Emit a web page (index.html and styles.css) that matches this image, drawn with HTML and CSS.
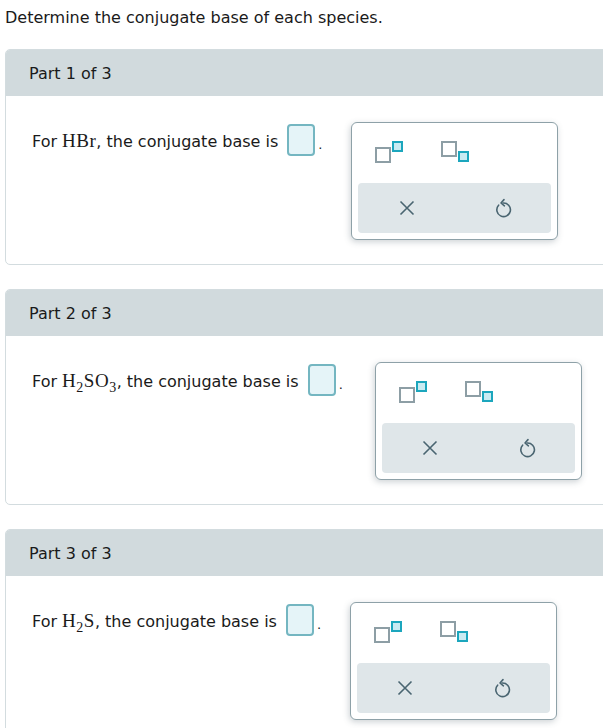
FILE: index.html
```html
<!DOCTYPE html>
<html>
<head>
<meta charset="utf-8">
<link rel="stylesheet" href="styles.css">
</head>
<body>
<div class="page">
  <p class="title">Determine the conjugate base of each species.</p>

  <section class="card">
    <div class="card-head">Part 1 of 3</div>
    <div class="card-body">
      <div class="question">
        <span>For <span class="math">HBr</span>, the conjugate base is</span>
        <span class="answer"></span>
        <span class="dot">.</span>
      </div>
      <div class="palette">
        <div class="tools">
          <span class="tool sup"><i class="big"></i><i class="small"></i></span>
          <span class="tool sub"><i class="big"></i><i class="small"></i></span>
        </div>
        <div class="actions">
          <span class="act"><svg width="16" height="16" viewBox="0 0 16 16"><path d="M1.5 1.5 L14.5 14.5 M14.5 1.5 L1.5 14.5" stroke="#4a6571" stroke-width="1.6" fill="none"/></svg></span>
          <span class="act"><svg width="18" height="20" viewBox="0 0 18 20"><path d="M4.6 7.2 A6.8 6.8 0 1 0 9 5" stroke="#4a6571" stroke-width="1.6" fill="none" stroke-linecap="round"/><path d="M10 1.6 L7 5 L10.4 7.8" stroke="#4a6571" stroke-width="1.6" fill="none" stroke-linecap="round" stroke-linejoin="round"/></svg></span>
        </div>
      </div>
    </div>
  </section>

  <section class="card">
    <div class="card-head">Part 2 of 3</div>
    <div class="card-body">
      <div class="question">
        <span>For <span class="math">H<sub>2</sub>SO<sub>3</sub></span>, the conjugate base is</span>
        <span class="answer"></span>
        <span class="dot">.</span>
      </div>
      <div class="palette wide-gap">
        <div class="tools">
          <span class="tool sup"><i class="big"></i><i class="small"></i></span>
          <span class="tool sub"><i class="big"></i><i class="small"></i></span>
        </div>
        <div class="actions">
          <span class="act"><svg width="16" height="16" viewBox="0 0 16 16"><path d="M1.5 1.5 L14.5 14.5 M14.5 1.5 L1.5 14.5" stroke="#4a6571" stroke-width="1.6" fill="none"/></svg></span>
          <span class="act"><svg width="18" height="20" viewBox="0 0 18 20"><path d="M4.6 7.2 A6.8 6.8 0 1 0 9 5" stroke="#4a6571" stroke-width="1.6" fill="none" stroke-linecap="round"/><path d="M10 1.6 L7 5 L10.4 7.8" stroke="#4a6571" stroke-width="1.6" fill="none" stroke-linecap="round" stroke-linejoin="round"/></svg></span>
        </div>
      </div>
    </div>
  </section>

  <section class="card">
    <div class="card-head">Part 3 of 3</div>
    <div class="card-body">
      <div class="question">
        <span>For <span class="math">H<sub>2</sub>S</span>, the conjugate base is</span>
        <span class="answer"></span>
        <span class="dot">.</span>
      </div>
      <div class="palette">
        <div class="tools">
          <span class="tool sup"><i class="big"></i><i class="small"></i></span>
          <span class="tool sub"><i class="big"></i><i class="small"></i></span>
        </div>
        <div class="actions">
          <span class="act"><svg width="16" height="16" viewBox="0 0 16 16"><path d="M1.5 1.5 L14.5 14.5 M14.5 1.5 L1.5 14.5" stroke="#4a6571" stroke-width="1.6" fill="none"/></svg></span>
          <span class="act"><svg width="18" height="20" viewBox="0 0 18 20"><path d="M4.6 7.2 A6.8 6.8 0 1 0 9 5" stroke="#4a6571" stroke-width="1.6" fill="none" stroke-linecap="round"/><path d="M10 1.6 L7 5 L10.4 7.8" stroke="#4a6571" stroke-width="1.6" fill="none" stroke-linecap="round" stroke-linejoin="round"/></svg></span>
        </div>
      </div>
    </div>
  </section>
</div>
</body>
</html>
```

FILE: styles.css
```css
html, body {
  margin: 0;
  padding: 0;
  background: #ffffff;
  overflow: hidden;
}

.page {
  font-family: "DejaVu Sans", Verdana, sans-serif;
  font-size: 16px;
  color: #1a1a1a;
  padding: 0 0 0 5px;
  width: 620px;
}

.title {
  margin: 0;
  padding-top: 8px;
  height: 49px;
  box-sizing: border-box;
  line-height: 20px;
}

.card {
  border: 1px solid #d3dcdf;
  border-radius: 5px;
  margin-bottom: 24px;
  overflow: hidden;
}

.card:last-child {
  margin-bottom: 0;
}

.card-head {
  background: #d1dadd;
  height: 46px;
  box-sizing: border-box;
  padding-top: 2px;
  line-height: 44px;
  padding-left: 23px;
}

.card-body {
  height: 168px;
  display: flex;
  align-items: flex-start;
  padding: 26px 0 0 26px;
  box-sizing: border-box;
}

.question {
  display: flex;
  align-items: center;
  margin-top: 3px;
  height: 32px;
  white-space: nowrap;
}

.math {
  font-family: "Liberation Serif", "Times New Roman", serif;
  font-size: 19px;
  letter-spacing: 0.5px;
}

.math sub {
  font-size: 14px;
  vertical-align: -5px;
  line-height: 0;
}

.answer {
  display: inline-block;
  width: 28px;
  height: 32px;
  box-sizing: border-box;
  border: 2px solid #74b6c1;
  background: #e5f4f8;
  border-radius: 4px;
  margin-left: 9px;
  margin-top: -2px;
}

.dot {
  margin-left: 3px;
  align-self: flex-end;
  line-height: 24px;
  font-size: 13px;
}

.palette {
  margin-left: 29px;
  width: 207px;
  height: 118px;
  box-sizing: border-box;
  border: 1px solid #8ea1a8;
  border-radius: 6px;
  background: #fff;
  box-shadow: -1px 2px 6px rgba(60, 80, 90, 0.25);
  display: flex;
  flex-direction: column;
  padding: 0 6px 6px 6px;
}

.wide-gap {
  margin-left: 32px;
}

.tools {
  height: 60px;
  position: relative;
}

.tool {
  position: absolute;
  top: 18px;
  width: 30px;
  height: 22px;
}

.tool.sup { left: 17px; }
.tool.sub { left: 83px; }

.tool i {
  position: absolute;
  display: block;
  box-sizing: border-box;
}

.tool .big {
  width: 16px;
  height: 16px;
  border: 2px solid #8d9ea5;
  background: #fff;
}

.tool .small {
  width: 11px;
  height: 11px;
  border: 2px solid #1ca6bd;
  background: #c9ebf2;
}

.sup .big { left: 0; top: 6px; }
.sup .small { left: 17px; top: 0; }
.sub .big { left: 0; top: 0; }
.sub .small { left: 17px; top: 10px; }

.actions {
  flex: 1;
  background: #dfe6e9;
  border-radius: 4px;
  display: flex;
}

.act {
  flex: 1;
  display: flex;
  align-items: center;
  justify-content: center;
}
```
